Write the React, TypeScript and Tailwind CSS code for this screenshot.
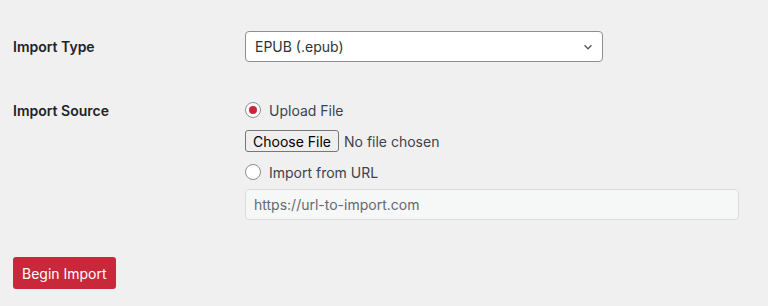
import React from "react"

const font = { fontFamily: 'Inter, "Liberation Sans", Arial, sans-serif' }

const Radio = ({ checked, label }: { checked?: boolean; label: string }) => (
  <label className="flex h-5 items-center gap-[8px] text-[14px] text-[#3c434a]">
    <span className="flex h-4 w-4 items-center justify-center rounded-full border border-[#8c8f94] bg-white">
      {checked && <span className="h-2 w-2 rounded-full bg-[#c9283a]" />}
    </span>
    {label}
  </label>
)

export default function App() {
  return (
    <div className="h-[306px] w-[768px] bg-[#f0f0f1] px-[13px] pt-[31px]" style={font}>
      <div className="grid grid-cols-[232px_1fr]">
        <div className="flex items-center text-[14px] font-semibold text-[#1d2327]">Import Type</div>
        <div className="flex h-[31px] w-[358px] items-center justify-between rounded-[4px] border border-[#8c8f94] bg-white pl-[9px] pr-[7px] text-[14px] text-[#2c3338]">
          <span>EPUB (.epub)</span>
          <svg width="14" height="14" viewBox="0 0 20 20" fill="none" stroke="#50575e" strokeWidth="1.8">
            <path d="M5 7.5l5 5 5-5" />
          </svg>
        </div>

        <div className="mt-[38px] flex h-5 items-center text-[14px] font-semibold text-[#1d2327]">Import Source</div>
        <div className="mt-[38px] flex flex-col">
          <Radio checked label="Upload File" />
          <div className="mt-[10px] flex items-center gap-[5px] text-[14px]">
            <span className="flex h-[22px] items-center rounded-[3px] border border-[#767676] bg-[#efefef] px-[7px] text-black">
              Choose File
            </span>
            <span className="text-[#3c434a]">No file chosen</span>
          </div>
          <div className="mt-[10px]">
            <Radio label="Import from URL" />
          </div>
          <div className="mt-[7px] flex h-[31px] w-[494px] items-center rounded-[4px] border border-[#dcdcde] bg-[#f6f7f7] pl-[8px] text-[14px] text-[#646970]">
            https://url-to-import.com
          </div>
        </div>
      </div>

      <button className="mt-[37px] flex h-8 items-center rounded-[3px] bg-[#c9283a] px-[9px] text-[14px] text-white">
        Begin Import
      </button>
    </div>
  )
}
